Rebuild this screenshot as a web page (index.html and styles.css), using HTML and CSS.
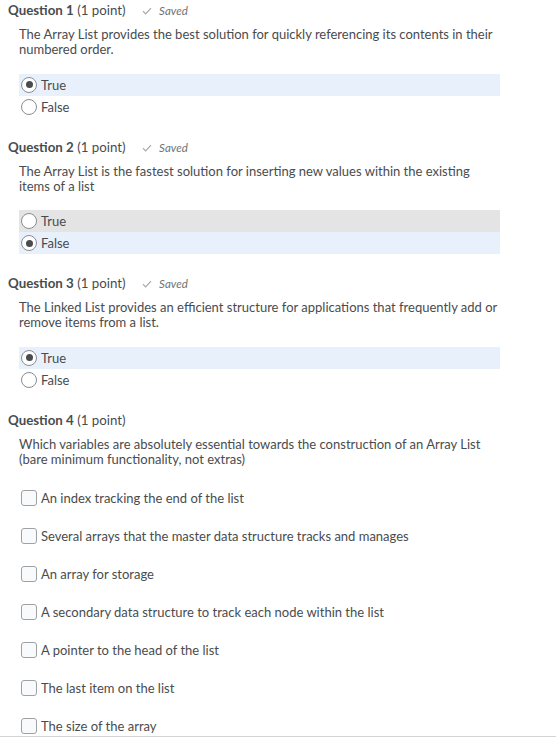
FILE: index.html
```html
<!doctype html>
<html lang="en">
  <head>
    <meta charset="UTF-8" />
    <meta name="viewport" content="width=device-width, initial-scale=1.0" />
    <title>Quiz</title>
    <link rel="stylesheet" href="styles.css">
  </head>
  <body>
    <div class="quiz">
      <section class="question">
        <h3 class="q-title">
          <strong>Question 1</strong> (1 point)
          <span class="saved"><svg width="10" height="8" viewBox="0 0 10 8"><path d="M1 4.2 L3.6 6.8 L9 1.2" fill="none" stroke="#a5a8ab" stroke-width="1.2"/></svg>Saved</span>
        </h3>
        <p class="q-text">The Array List provides the best solution for quickly referencing its contents in their numbered order.</p>
        <ul class="choices">
          <li class="choice selected"><span class="radio checked"></span>True</li>
          <li class="choice"><span class="radio"></span>False</li>
        </ul>
      </section>

      <section class="question">
        <h3 class="q-title">
          <strong>Question 2</strong> (1 point)
          <span class="saved"><svg width="10" height="8" viewBox="0 0 10 8"><path d="M1 4.2 L3.6 6.8 L9 1.2" fill="none" stroke="#a5a8ab" stroke-width="1.2"/></svg>Saved</span>
        </h3>
        <p class="q-text">The Array List is the fastest solution for inserting new values within the existing items of a list</p>
        <ul class="choices">
          <li class="choice hover"><span class="radio"></span>True</li>
          <li class="choice selected"><span class="radio checked"></span>False</li>
        </ul>
      </section>

      <section class="question">
        <h3 class="q-title">
          <strong>Question 3</strong> (1 point)
          <span class="saved"><svg width="10" height="8" viewBox="0 0 10 8"><path d="M1 4.2 L3.6 6.8 L9 1.2" fill="none" stroke="#a5a8ab" stroke-width="1.2"/></svg>Saved</span>
        </h3>
        <p class="q-text">The Linked List provides an efficient structure for applications that frequently add or remove items from a list.</p>
        <ul class="choices">
          <li class="choice selected"><span class="radio checked"></span>True</li>
          <li class="choice"><span class="radio"></span>False</li>
        </ul>
      </section>

      <section class="question last">
        <h3 class="q-title"><strong>Question 4</strong> (1 point)</h3>
        <p class="q-text">Which variables are absolutely essential towards the construction of an Array List (bare minimum functionality, not extras)</p>
        <ul class="checks">
          <li class="check"><span class="box"></span>An index tracking the end of the list</li>
          <li class="check"><span class="box"></span>Several arrays that the master data structure tracks and manages</li>
          <li class="check"><span class="box"></span>An array for storage</li>
          <li class="check"><span class="box"></span>A secondary data structure to track each node within the list</li>
          <li class="check"><span class="box"></span>A pointer to the head of the list</li>
          <li class="check"><span class="box"></span>The last item on the list</li>
          <li class="check"><span class="box"></span>The size of the array</li>
        </ul>
      </section>
    </div>
  </body>
</html>
```

FILE: styles.css
```css
body {
  font-family: Lato, "Open Sans", sans-serif;
  margin: 0;
  padding: 0;
  background-color: #fff;
  color: #494c4e;
  font-size: 13px;
}
.quiz {
  padding: 0 0 0 8px;
}
.question {
  margin-bottom: 19px;
}
.q-title {
  margin: 0;
  height: 20px;
  line-height: 20px;
  font-size: 13.3px;
  font-weight: normal;
  color: #494c4e;
}
.q-title strong {
  font-weight: bold;
}
.saved {
  margin-left: 13px;
  font-size: 11.5px;
  font-style: italic;
  color: #6e7376;
}
.saved svg {
  margin-right: 7px;
  vertical-align: 0;
}
.q-text {
  margin: 7px 0 0 11px;
  width: 479px;
  line-height: 15px;
}
.choices {
  list-style: none;
  margin: 16.6px 0 0 11px;
  padding: 0;
  width: 481px;
}
.choice {
  display: flex;
  align-items: center;
  height: 22px;
  padding-left: 2px;
}
.choice.selected {
  background-color: #e8f1fb;
}
.choice.hover {
  background-color: #e4e4e4;
}
.radio {
  box-sizing: border-box;
  width: 16px;
  height: 16px;
  border: 1px solid #8a8d90;
  border-radius: 50%;
  background-color: #fff;
  margin-right: 4px;
  display: flex;
  align-items: center;
  justify-content: center;
}
.radio.checked::after {
  content: "";
  width: 7px;
  height: 7px;
  border-radius: 50%;
  background-color: #494c4e;
}
.checks {
  list-style: none;
  margin: 21.5px 0 0 11px;
  padding: 0;
  display: flex;
  flex-direction: column;
  gap: 18px;
}
.check {
  display: flex;
  align-items: center;
  height: 20px;
  padding-left: 2px;
}
.box {
  box-sizing: border-box;
  width: 16px;
  height: 16px;
  border: 1px solid #9ea1a4;
  border-radius: 3px;
  background-color: #f9fafb;
  margin-right: 4px;
}
.question.last {
  margin-bottom: 0;
  border-bottom: 1px solid #d3d4d6;
  margin-left: -8px;
  padding-left: 8px;
}
```
